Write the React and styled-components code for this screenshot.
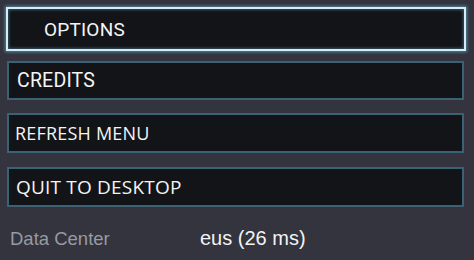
import React from 'react'
import styled, { createGlobalStyle, css } from 'styled-components'

const Global = createGlobalStyle`
  html, body {
    margin: 0;
    padding: 0;
    background: #33343d;
  }
  body {
    width: 474px;
    height: 260px;
    overflow: hidden;
  }
`

const Menu = styled.div`
  display: flex;
  flex-direction: column;
  padding: 7px 9px 0 6px;
`

const MenuButton = styled.div`
  box-sizing: border-box;
  display: flex;
  align-items: center;
  height: ${(p) => p.h}px;
  margin-top: ${(p) => p.mt}px;
  margin-left: ${(p) => (p.active ? 0 : 1)}px;
  margin-right: ${(p) => (p.active ? -1 : 1)}px;
  padding-left: ${(p) => p.pl}px;
  background: #131417;
  border: 2px solid #3b6274;
  color: #f4f5f6;
  font-family: ${(p) => p.font};
  font-size: ${(p) => p.size}px;
  letter-spacing: 0.2px;
  ${(p) =>
    p.active &&
    css`
      border: 2px solid #d3ecf6;
      box-shadow: 0 0 3px 1px rgba(110, 190, 225, 0.6),
        inset 0 0 3px 1px rgba(90, 170, 210, 0.45);
    `}
`

const InfoRow = styled.div`
  display: flex;
  align-items: center;
  margin-top: 20px;
  padding-left: 4px;
  font-family: 'Liberation Sans', Arial, sans-serif;
`

const Label = styled.span`
  width: 190px;
  color: #989aa1;
  font-size: 18.5px;
`

const Value = styled.span`
  color: #f2f3f5;
  font-size: 20px;
`

const items = [
  { label: 'OPTIONS', h: 44, mt: 0, pl: 36, active: true, font: "Roboto, sans-serif", size: 19 },
  { label: 'CREDITS', h: 39, mt: 10, pl: 8, font: "Roboto, sans-serif", size: 19.5 },
  { label: 'REFRESH MENU', h: 40, mt: 13, pl: 6, font: "'Open Sans', sans-serif", size: 18 },
  { label: 'QUIT TO DESKTOP', h: 40, mt: 14, pl: 7, font: "'Open Sans', sans-serif", size: 19 },
]

export default function App() {
  return (
    <>
      <Global />
      <Menu>
        {items.map((it) => (
          <MenuButton key={it.label} {...it}>
            {it.label}
          </MenuButton>
        ))}
        <InfoRow>
          <Label>Data Center</Label>
          <Value>eus (26 ms)</Value>
        </InfoRow>
      </Menu>
    </>
  )
}
